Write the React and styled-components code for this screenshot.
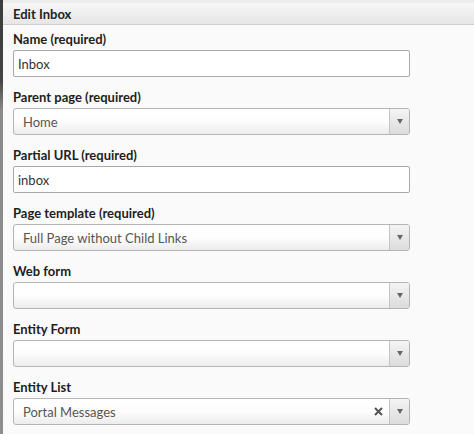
import React from "react";
import styled, { createGlobalStyle } from "styled-components";

const Global = createGlobalStyle`
  html, body { margin: 0; padding: 0; background: #fafafa; }
  body { font-family: Lato, "Open Sans", sans-serif; }
  * { box-sizing: border-box; }
`;

const Page = styled.div`
  display: flex;
  width: 474px;
  height: 434px;
  overflow: hidden;
  background: #fafafa;
`;

const SideBar = styled.div`
  width: 3px;
  flex: none;
  background: linear-gradient(#3c3c3c 0px, #444 80px, #8a8a8a 110px, #8e8e8e 100%);
`;

const Panel = styled.div`
  flex: 1;
  display: flex;
  flex-direction: column;
  padding-top: 3px;
  background: linear-gradient(#ececec 0px, #ececec 3px, #fafafa 3px);
`;

const Header = styled.div`
  height: 22px;
  display: flex;
  align-items: center;
  padding-left: 10px;
  background: linear-gradient(#f7f7f7, #e6e6e6);
  border-bottom: 1px solid #cfcfcf;
  font-weight: 700;
  font-size: 13px;
  color: #222;
`;

const Form = styled.div`
  display: flex;
  flex-direction: column;
  padding: 6px 0 0 10px;
  gap: 12px;
`;

const Field = styled.div`
  display: flex;
  flex-direction: column;
`;

const Label = styled.label`
  height: 16px;
  display: flex;
  align-items: center;
  font-weight: 700;
  font-size: 13px;
  color: #1e1e1e;
`;

const TextBox = styled.div`
  margin-top: 3px;
  width: 397px;
  height: 27px;
  display: flex;
  align-items: center;
  padding-left: 4px;
  background: #fff;
  border: 1px solid #a9a9a9;
  border-radius: 2px;
  font-size: 13px;
  color: #333;
`;

const SelectBox = styled.div`
  margin-top: 3px;
  width: 397px;
  height: 27px;
  display: flex;
  background: linear-gradient(#ffffff 0%, #fdfdfd 50%, #ececec 100%);
  border: 1px solid #b4b4b4;
  border-radius: 3px;
`;

const SelectValue = styled.div`
  flex: 1;
  display: flex;
  align-items: center;
  padding-left: 9px;
  font-size: 13px;
  color: #555;
`;

const Clear = styled.div`
  width: 22px;
  display: flex;
  align-items: center;
  justify-content: center;
  color: #555;
`;

const ArrowButton = styled.div`
  width: 20px;
  flex: none;
  display: flex;
  align-items: center;
  justify-content: center;
  border-left: 1px solid #c4c4c4;
  background: linear-gradient(#f4f4f4, #dcdcdc);
  border-radius: 0 2px 2px 0;
`;

const Arrow = styled.div`
  width: 0;
  height: 0;
  border-left: 3.5px solid transparent;
  border-right: 3.5px solid transparent;
  border-top: 5px solid #666;
`;

function Select({ value, clearable }) {
  return (
    <SelectBox>
      <SelectValue>{value}</SelectValue>
      {clearable && (
        <Clear>
          <svg width="9" height="9" viewBox="0 0 9 9">
            <path d="M1 1L8 8M8 1L1 8" stroke="#555" strokeWidth="2" />
          </svg>
        </Clear>
      )}
      <ArrowButton>
        <Arrow />
      </ArrowButton>
    </SelectBox>
  );
}

const fields = [
  { label: "Name (required)", type: "text", value: "Inbox" },
  { label: "Parent page (required)", type: "select", value: "Home" },
  { label: "Partial URL (required)", type: "text", value: "inbox" },
  { label: "Page template (required)", type: "select", value: "Full Page without Child Links" },
  { label: "Web form", type: "select", value: "" },
  { label: "Entity Form", type: "select", value: "" },
  { label: "Entity List", type: "select", value: "Portal Messages", clearable: true },
];

export default function App() {
  return (
    <>
      <Global />
      <Page>
        <SideBar />
        <Panel>
          <Header>Edit Inbox</Header>
          <Form>
            {fields.map((f) => (
              <Field key={f.label}>
                <Label>{f.label}</Label>
                {f.type === "text" ? (
                  <TextBox>{f.value}</TextBox>
                ) : (
                  <Select value={f.value} clearable={f.clearable} />
                )}
              </Field>
            ))}
          </Form>
        </Panel>
      </Page>
    </>
  );
}
